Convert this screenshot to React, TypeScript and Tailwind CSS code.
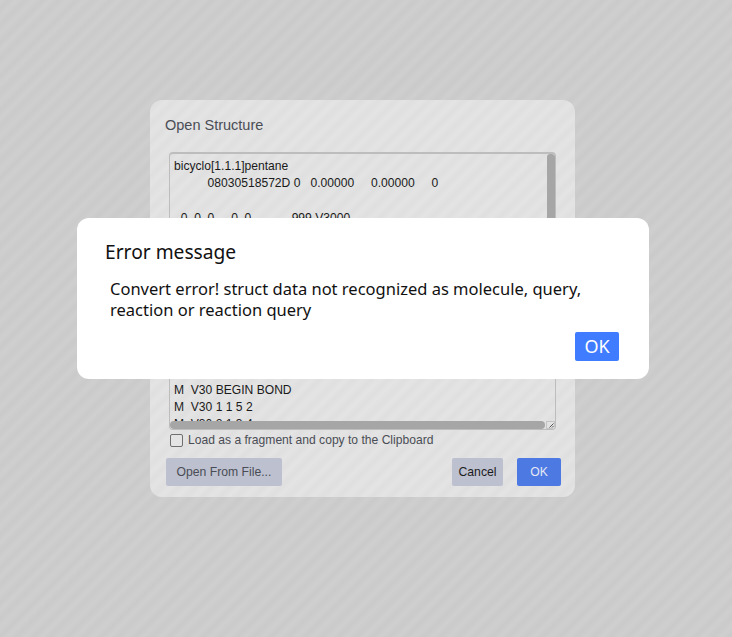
const molfile = `bicyclo[1.1.1]pentane
          08030518572D 0   0.00000     0.00000     0

  0  0  0     0  0            999 V3000
M  V30 BEGIN CTAB
M  V30 COUNTS 5 6 0 0 0
M  V30 BEGIN ATOM
M  V30 1 C 5.0 -3.0 0 0
M  V30 2 C 5.9 -2.5 0 0
M  V30 3 C 5.0 -2.0 0 0
M  V30 4 C 4.1 -2.5 0 0
M  V30 5 C 5.0 -2.5 0 0
M  V30 END ATOM
M  V30 BEGIN BOND
M  V30 1 1 5 2
M  V30 2 1 3 4`

function OpenStructureDialog() {
  return (
    <div className="flex h-[397px] w-[425px] flex-col rounded-[12px] bg-[repeating-linear-gradient(135deg,#e4e4e4_0px,#dfdfdf_6px,#e4e4e4_12px)] pt-[16px] pb-[11px] font-['Liberation_Sans',Arial,sans-serif]">
      <h2 className="ml-[15px] text-[14.5px] leading-[18px] font-normal text-[#4a4d55]">Open Structure</h2>

      <div className="relative mt-[18px] ml-[19px] h-[279px] w-[387px] overflow-hidden rounded-[4px] border border-t-2 border-[#bdbdbd]">
        <pre className="px-[4px] pt-[4px] font-['Liberation_Sans',Arial,sans-serif] text-[12.1px] leading-[17.2px] text-[#1a1a1a]">{molfile}</pre>
        <div className="absolute top-0 right-0 h-[200px] w-[8px] rounded-[3px] bg-[#a6a6a6]" />
        <div className="absolute bottom-0 left-0 h-[8px] w-[375px] rounded-[4px] bg-[#a6a6a6]" />
        <div className="absolute right-0 bottom-0 flex h-[8px] w-[9px] items-end justify-end border border-[#c4c4c4] bg-[#e2e2e2]">
          <svg width="5" height="5" viewBox="0 0 5 5">
            <path d="M0.5 4.5 L4.5 0.5 M3 4.5 L4.5 3" stroke="#555" strokeWidth="1" fill="none" />
          </svg>
        </div>
      </div>

      <label className="mt-[2px] ml-[20px] flex h-[16px] items-center gap-[5px] text-[12.1px] text-[#4a4d55]">
        <span className="h-[13px] w-[13px] rounded-[2px] border border-[#6f6f6f] bg-[#e4e4e4]" />
        Load as a fragment and copy to the Clipboard
      </label>

      <div className="mt-[10px] flex items-start pr-[14px] pl-[16px] text-[12.2px] leading-[26px]">
        <button className="h-[28px] w-[116px] rounded-[2px] bg-[#bdc0cf] text-[#4a4d55]">Open From File...</button>
        <button className="ml-auto h-[28px] w-[51px] rounded-[2px] bg-[#bdc0cf] text-[#1c1c1c]">Cancel</button>
        <button className="ml-[14px] h-[28px] w-[44px] rounded-[2px] bg-[#4d79e3] text-[#e4e8f4]">OK</button>
      </div>
    </div>
  )
}

function ErrorDialog() {
  return (
    <div className="absolute top-[218px] left-[77px] flex h-[161px] w-[572px] flex-col rounded-[12px] bg-white font-['Noto_Sans','Open_Sans',sans-serif] text-[#111111]">
      <h1 className="mt-[20px] ml-[28px] text-[19.2px] leading-[27px] font-normal">Error message</h1>
      <p className="mt-[14px] mr-[60px] ml-[33px] text-[16.5px] leading-[20.5px]">
        Convert error! struct data not recognized as molecule, query, reaction or reaction query
      </p>
      <div className="mt-[12px] flex justify-end pr-[30px]">
        <button className="h-[29px] w-[44px] rounded-[2px] bg-[#3f7cff] text-[18px] leading-[29px] text-white">OK</button>
      </div>
    </div>
  )
}

export default function App() {
  return (
    <div className="relative flex h-[637px] w-[732px] justify-center overflow-hidden bg-[repeating-linear-gradient(135deg,#cfcfcf_0px,#cacaca_6px,#cfcfcf_12px)] pt-[100px] pr-[7px]">
      <OpenStructureDialog />
      <ErrorDialog />
    </div>
  )
}
